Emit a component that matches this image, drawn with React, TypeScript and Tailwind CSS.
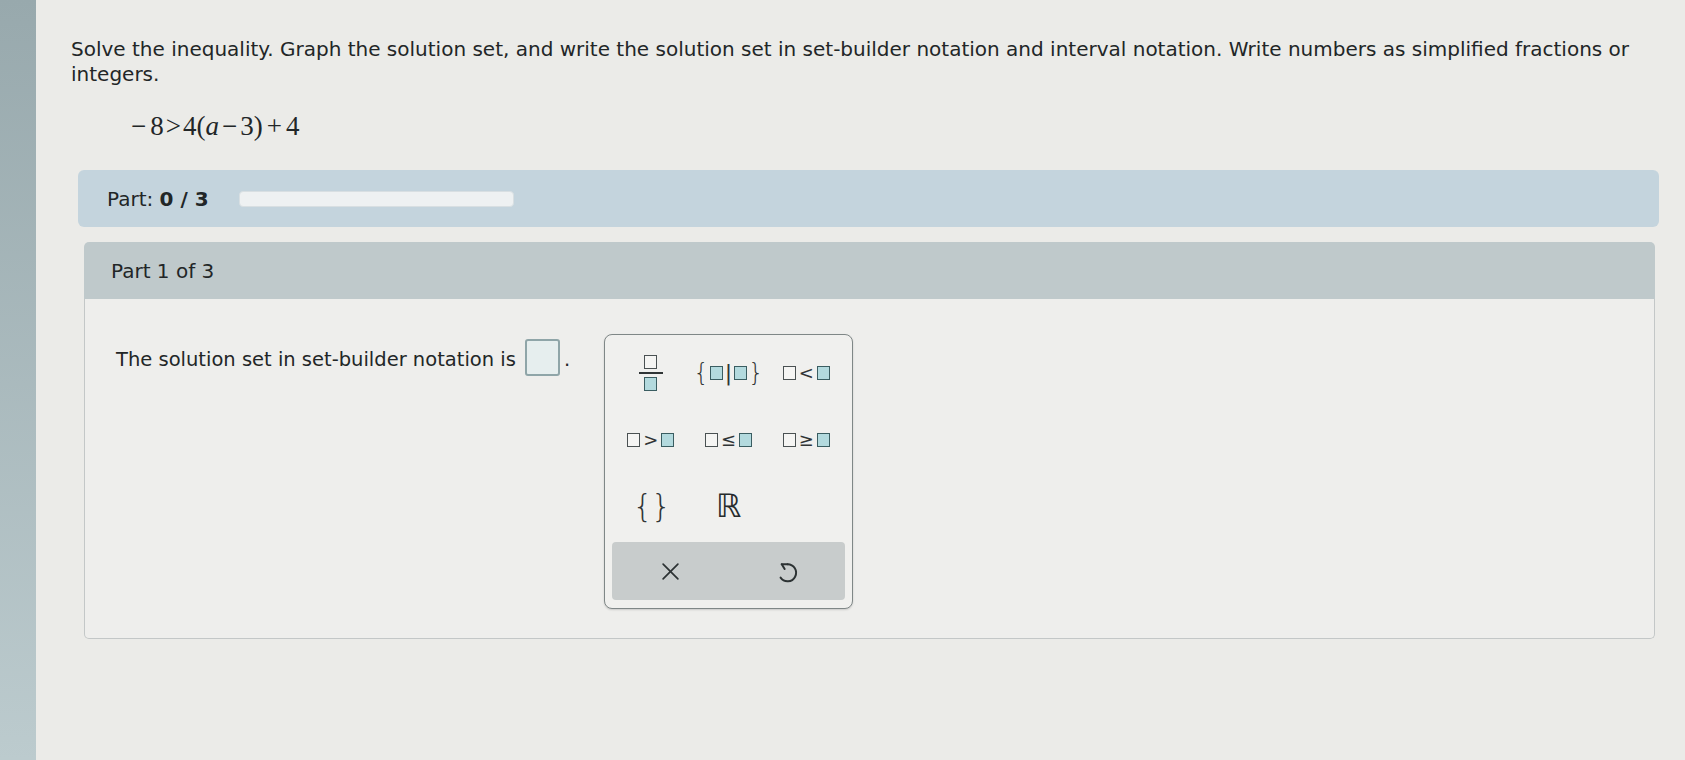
import React from 'react';

const sans = { fontFamily: '"DejaVu Sans", "Liberation Sans", sans-serif' };

function Box({ filled }: { filled?: boolean }) {
  return (
    <span
      className={
        filled
          ? 'inline-block w-[13px] h-[14px] border-[1.5px] border-[#3a5d61] bg-[#b3dade]'
          : 'inline-block w-[13px] h-[14px] border-[1.5px] border-[#4a5152] bg-[#f5f5f3]'
      }
    />
  );
}

function Rel({ op }: { op: string }) {
  return (
    <span className="flex items-center gap-[3px] text-[#303536]">
      <Box />
      <span className="text-[18px] leading-none">{op}</span>
      <Box filled />
    </span>
  );
}

function UndoIcon() {
  return (
    <svg width="28" height="28" viewBox="0 0 24 24" fill="none" stroke="#2c3233" strokeWidth="1.7" strokeLinecap="round" strokeLinejoin="round">
      <path d="M7.5 6.2H12.5" />
      <path d="M7.5 6.2L10 10.3" />
      <path d="M12.5 6.2A7.3 7.3 0 1 1 6.5 17.7" />
    </svg>
  );
}

function CloseIcon() {
  return (
    <svg width="19" height="19" viewBox="0 0 18 18" stroke="#2c3233" strokeWidth="1.6" strokeLinecap="round">
      <path d="M2 2L16 16" />
      <path d="M16 2L2 16" />
    </svg>
  );
}

function Keypad() {
  return (
    <div className="w-[249px] h-[275px] shrink-0 rounded-[8px] border border-[#7f8787] bg-[#f0f0ee] shadow-[0_1px_2px_rgba(0,0,0,0.15)] pt-[5px] px-[7px] pb-[8px] flex flex-col">
      <div className="grid grid-cols-3 grid-rows-3 h-[201px]">
        <div className="flex items-center justify-center">
          <div className="flex flex-col items-center">
            <Box />
            <span className="w-[24px] h-[1.5px] bg-[#303536] my-[3px]" />
            <Box filled />
          </div>
        </div>
        <div className="flex items-center justify-center text-[#303536]">
          <span className="text-[24px] leading-none font-extralight mr-[1px]">{'{'}</span>
          <Box filled />
          <span className="text-[22px] leading-none mx-[2px]">|</span>
          <Box filled />
          <span className="text-[24px] leading-none font-extralight ml-[1px]">{'}'}</span>
        </div>
        <div className="flex items-center justify-center">
          <Rel op="<" />
        </div>
        <div className="flex items-center justify-center">
          <Rel op=">" />
        </div>
        <div className="flex items-center justify-center">
          <Rel op="≤" />
        </div>
        <div className="flex items-center justify-center">
          <Rel op="≥" />
        </div>
        <div className="flex items-center justify-center">
          <span className="text-[32px] leading-none font-extralight text-[#303536] tracking-[-2px]">{'{}'}</span>
        </div>
        <div className="flex items-center justify-center">
          <span className="text-[32px] leading-none text-[#262b2c]">ℝ</span>
        </div>
        <div />
      </div>
      <div className="mt-[3px] h-[58px] rounded-[4px] bg-[#c8cccc] flex">
        <div className="flex-1 flex items-center justify-center">
          <CloseIcon />
        </div>
        <div className="flex-1 flex items-center justify-center">
          <UndoIcon />
        </div>
      </div>
    </div>
  );
}

export default function App() {
  return (
    <div className="flex h-[760px] w-full overflow-hidden bg-[#ebebe8]" style={sans}>
      <div className="w-[36px] shrink-0 bg-gradient-to-b from-[#98a9ad] to-[#bccbce]" />
      <div className="flex-1 pr-[26px]">
        <p className="pt-[37px] pl-[35px] pr-[20px] text-[20px] leading-[25px] text-[#222627]">
          Solve the inequality. Graph the solution set, and write the solution set in set-builder notation and interval notation. Write numbers as simplified fractions or integers.
        </p>

        <div
          className="mt-[23px] pl-[95px] text-[27px] leading-[32px] text-[#222627] flex items-center"
          style={{ fontFamily: '"Liberation Serif", "Times New Roman", serif' }}
        >
          <span className="mr-[4px]">−</span>
          <span>8</span>
          <span className="mx-[2px]">&gt;</span>
          <span>4</span>
          <span>(</span>
          <span className="italic">a</span>
          <span className="mx-[3px]">−</span>
          <span>3</span>
          <span>)</span>
          <span className="mx-[4px]">+</span>
          <span>4</span>
        </div>

        <div className="mt-[28px] ml-[42px] h-[57px] rounded-[6px] bg-[#c4d4dd] flex items-center pl-[29px]">
          <span className="text-[20px] text-[#222627]">
            Part: <span className="font-bold">0 / 3</span>
          </span>
          <div className="ml-[30px] w-[275px] h-[16px] rounded-[4px] bg-[#eef1f2] border border-[#d8dfe2]" />
        </div>

        <div className="mt-[15px] ml-[48px] mr-[4px]">
          <div className="h-[57px] rounded-t-[5px] bg-[#bfc9cb] flex items-center pl-[27px]">
            <span className="text-[20px] text-[#222627]">Part 1 of 3</span>
          </div>
          <div className="h-[340px] bg-[#eeeeec] border border-t-0 border-[#c3c7c7] rounded-b-[5px] flex items-start pl-[31px]">
            <span className="mt-[48px] text-[19.5px] leading-[25px] text-[#222627]">
              The solution set in set-builder notation is
            </span>
            <span className="mt-[40px] ml-[9px] w-[35px] h-[37px] rounded-[3px] border-2 border-[#8fa5a8] bg-[#e6eeee]" />
            <span className="mt-[48px] ml-[4px] text-[19.5px] leading-[25px] text-[#222627]">.</span>
            <div className="mt-[35px] ml-[34px]">
              <Keypad />
            </div>
          </div>
        </div>
      </div>
    </div>
  );
}
